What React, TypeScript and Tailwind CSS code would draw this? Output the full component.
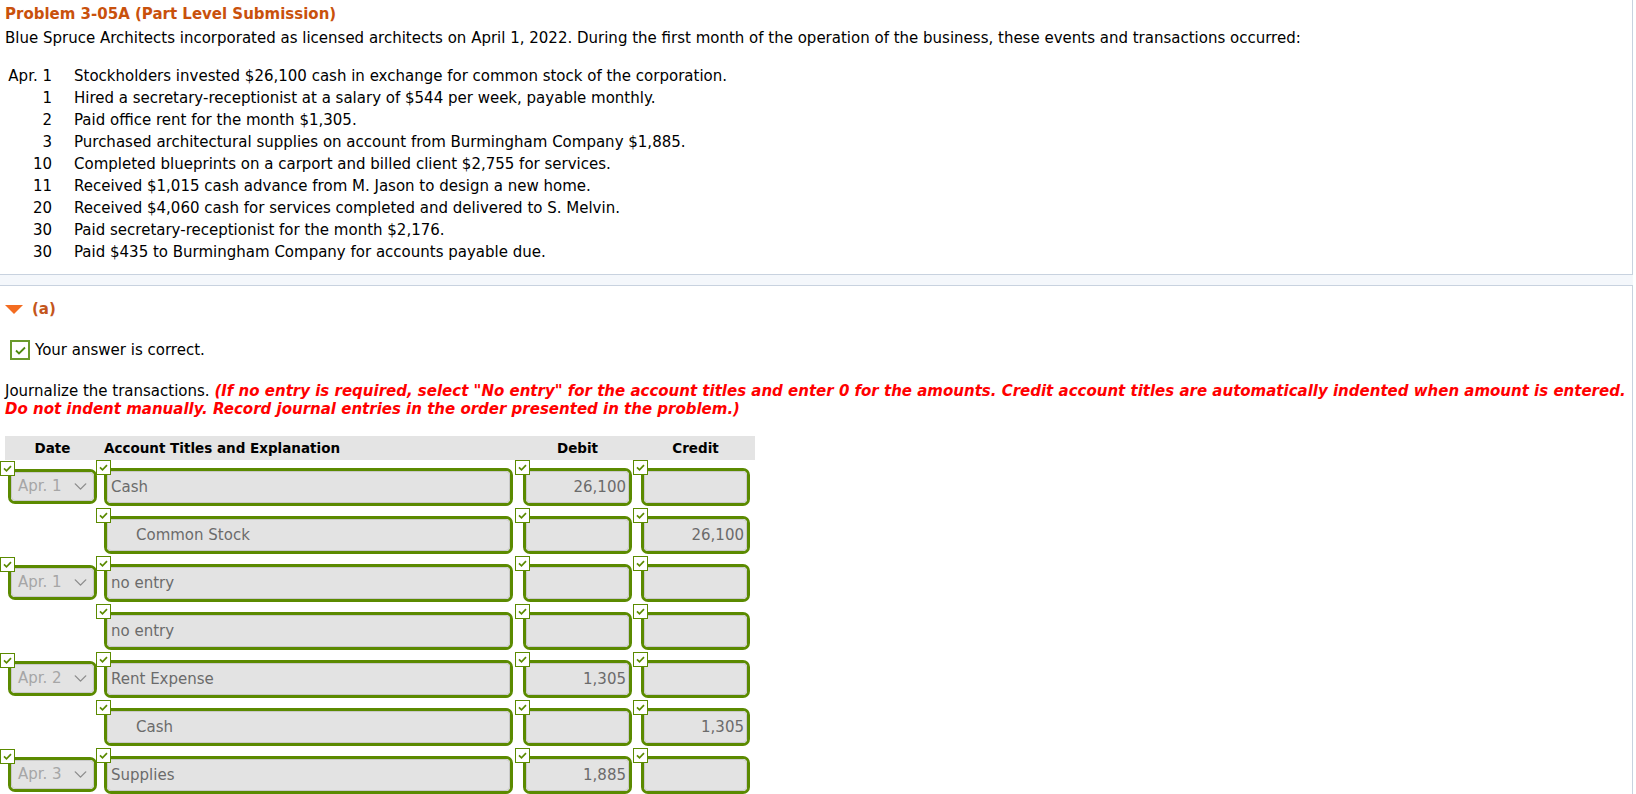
import React from 'react';
import { ChevronDown } from 'lucide-react';

const events: [string, string][] = [
  ['Apr. 1', 'Stockholders invested $26,100 cash in exchange for common stock of the corporation.'],
  ['1', 'Hired a secretary-receptionist at a salary of $544 per week, payable monthly.'],
  ['2', 'Paid office rent for the month $1,305.'],
  ['3', 'Purchased architectural supplies on account from Burmingham Company $1,885.'],
  ['10', 'Completed blueprints on a carport and billed client $2,755 for services.'],
  ['11', 'Received $1,015 cash advance from M. Jason to design a new home.'],
  ['20', 'Received $4,060 cash for services completed and delivered to S. Melvin.'],
  ['30', 'Paid secretary-receptionist for the month $2,176.'],
  ['30', 'Paid $435 to Burmingham Company for accounts payable due.'],
];

type Entry = { date?: string; account: string; indent?: boolean; debit?: string; credit?: string };

const entries: Entry[] = [
  { date: 'Apr. 1', account: 'Cash', debit: '26,100' },
  { account: 'Common Stock', indent: true, credit: '26,100' },
  { date: 'Apr. 1', account: 'no entry' },
  { account: 'no entry' },
  { date: 'Apr. 2', account: 'Rent Expense', debit: '1,305' },
  { account: 'Cash', indent: true, credit: '1,305' },
  { date: 'Apr. 3', account: 'Supplies', debit: '1,885' },
  { account: '' },
];

// little green tick sitting on the corner of every graded field
const Tick = () => (
  <span className="absolute -left-2 -top-2 z-10 flex h-[15px] w-[15px] items-center justify-center border border-[#5b8a00] bg-white">
    <svg width="9" height="7" viewBox="0 0 9 7">
      <path d="M1 3.4 L3.5 5.8 L8 1.2" fill="none" stroke="#5b8a00" strokeWidth="1.7" />
    </svg>
  </span>
);

const Field = ({ className = '', tall = true, children }: { className?: string; tall?: boolean; children?: React.ReactNode }) => (
  <div className={`relative ${className}`}>
    <Tick />
    <div className={`${tall ? 'h-[38px]' : 'mt-[1px] h-[35px]'} rounded-[7px] border-[3px] border-[#5b8a00]`}>
      <div className="flex h-full items-center rounded-[4px] border border-[#c9c9c9] bg-[#e3e3e3]">{children}</div>
    </div>
  </div>
);

export default function App() {
  return (
    <div className="h-screen overflow-hidden bg-white font-['DejaVu_Sans',Verdana,sans-serif] text-[15px] text-black">
      {/* problem statement */}
      <div className="w-[1633px] border-r border-b border-[#c8d2df] pl-[5px] pt-[4px] pb-[11px]">
        <h1 className="text-[15px] leading-[20px] font-bold text-[#c9510c]">Problem 3-05A (Part Level Submission)</h1>
        <p className="mt-[4px] leading-[20px]">
          Blue Spruce Architects incorporated as licensed architects on April 1, 2022. During the first month of the operation of the business, these events and transactions occurred:
        </p>
        <div className="mt-[17px]">
          {events.map(([d, text], i) => (
            <div key={i} className="flex leading-[22px]">
              <span className="w-[47px] text-right">{d}</span>
              <span className="ml-[22px]">{text}</span>
            </div>
          ))}
        </div>
      </div>
      <div className="h-[10px] w-[1633px] bg-[#f4f7fb]" />

      {/* part (a) */}
      <div className="w-[1633px] border-t border-r border-[#c8d2df] pt-[13px]">
        <div className="flex items-center leading-[20px]">
          <svg width="18" height="9" viewBox="0 0 18 9" className="ml-[5px]">
            <polygon points="0,0 18,0 9,9" fill="#f36c21" />
          </svg>
          <span className="ml-[9px] font-bold text-[#c4561c]">(a)</span>
        </div>

        <div className="mt-[21px] flex items-center">
          <span className="ml-[10px] flex h-[20px] w-[20px] items-center justify-center border-2 border-[#6a9a2c] bg-white">
            <svg width="11" height="9" viewBox="0 0 11 9">
              <path d="M1 4.5 L4 7.5 L10 1.5" fill="none" stroke="#4f8a10" strokeWidth="1.8" />
            </svg>
          </span>
          <span className="ml-[5px] leading-[20px]">Your answer is correct.</span>
        </div>

        <p className="mt-[22px] pl-[5px] leading-[18px]">
          Journalize the transactions.{' '}
          <span className="font-bold italic text-[#ff0000]">
            (If no entry is required, select "No entry" for the account titles and enter 0 for the amounts. Credit account titles are automatically indented when amount is entered.
            <br />
            Do not indent manually. Record journal entries in the order presented in the problem.)
          </span>
        </p>

        <div className="mt-[18px] pl-[5px]">
          <div className="flex h-[24px] w-[750px] items-center bg-[#e4e4e4] text-[13.5px] font-bold">
            <span className="w-[99px] pr-[4px] text-center">Date</span>
            <span className="w-[409px]">Account Titles and Explanation</span>
            <span className="ml-[10px] w-[109px] text-center">Debit</span>
            <span className="ml-[9px] w-[109px] text-center">Credit</span>
          </div>

          {entries.map((e, i) => (
            <div key={i} className="flex h-[48px] items-start pt-[8px] text-[#6b6b6b]">
              <div className="w-[99px]">
                {e.date && (
                  <Field className="ml-[3px] w-[89px]" tall={false}>
                    <span className="ml-[6px] flex-1 text-[#a6a6a6]">{e.date}</span>
                    <ChevronDown size={21} strokeWidth={1.6} className="mr-[2px] text-[#8c8c8c]" />
                  </Field>
                )}
              </div>
              <Field className="w-[409px]">
                <span className={e.indent ? 'ml-[28px]' : 'ml-[3px]'}>{e.account}</span>
              </Field>
              <Field className="ml-[10px] w-[109px]">
                <span className="w-full pr-[2px] text-right">{e.debit}</span>
              </Field>
              <Field className="ml-[9px] w-[109px]">
                <span className="w-full pr-[2px] text-right">{e.credit}</span>
              </Field>
            </div>
          ))}
        </div>
      </div>
    </div>
  );
}
